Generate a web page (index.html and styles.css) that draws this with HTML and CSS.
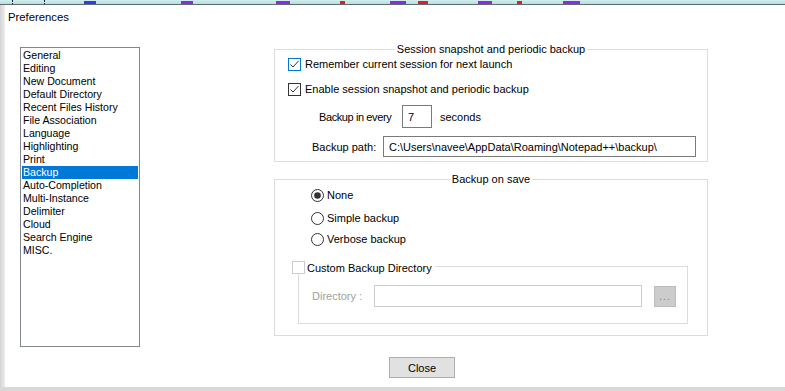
FILE: index.html
```html
<!DOCTYPE html>
<html>
<head>
<meta charset="utf-8">
<title>Preferences</title>
<link rel="stylesheet" href="styles.css">
</head>
<body>
<div class="screen">
  <div class="behind">
    <span class="dot d1"></span>
    <span class="dot d2"></span>
    <span class="bit blue b1"></span>
    <span class="bit purple b2"></span>
    <span class="bit purple b3"></span>
    <span class="bit red b4"></span>
    <span class="bit purple b5"></span>
    <span class="bit red b6"></span>
    <span class="bit purple b7"></span>
    <span class="bit red b8"></span>
    <span class="bit purple b9"></span>
  </div>
  <div class="main">
    <div class="side"></div>
    <div class="window">
      <div class="titlebar">Preferences</div>
      <div class="body">
        <ul class="list">
          <li>General</li>
          <li>Editing</li>
          <li>New Document</li>
          <li>Default Directory</li>
          <li>Recent Files History</li>
          <li>File Association</li>
          <li>Language</li>
          <li>Highlighting</li>
          <li>Print</li>
          <li class="sel">Backup</li>
          <li>Auto-Completion</li>
          <li>Multi-Instance</li>
          <li>Delimiter</li>
          <li>Cloud</li>
          <li>Search Engine</li>
          <li>MISC.</li>
        </ul>
        <div class="panel">
          <div class="group g1">
            <div class="gtitle">Session snapshot and periodic backup</div>
            <div class="row r1">
              <svg class="cb" width="13" height="13" viewBox="0 0 13 13"><rect x="0.5" y="0.5" width="12" height="12" fill="#fff" stroke="#0078d7"/><polyline points="2.5,6.5 5,9 10.5,3" fill="none" stroke="#333" stroke-width="1"/></svg>
              <span>Remember current session for next launch</span>
            </div>
            <div class="row r2">
              <svg class="cb" width="13" height="13" viewBox="0 0 13 13"><rect x="0.5" y="0.5" width="12" height="12" fill="#fff" stroke="#333"/><polyline points="2.5,6.5 5,9 10.5,3" fill="none" stroke="#333" stroke-width="1"/></svg>
              <span>Enable session snapshot and periodic backup</span>
            </div>
            <div class="row r3">
              <span class="lbl-every">Backup in every</span>
              <div class="input num">7</div>
              <span class="secs">seconds</span>
            </div>
            <div class="row r4">
              <span class="lbl-path">Backup path:</span>
              <div class="input path">C:\Users\navee\AppData\Roaming\Notepad++\backup\</div>
            </div>
          </div>
          <div class="group g2">
            <div class="gtitle">Backup on save</div>
            <div class="row rad ra1">
              <svg class="rb" width="13" height="13" viewBox="0 0 13 13"><circle cx="6.5" cy="6.5" r="6" fill="#fff" stroke="#333"/><circle cx="6.5" cy="6.5" r="3.3" fill="#333"/></svg>
              <span>None</span>
            </div>
            <div class="row rad ra2">
              <svg class="rb" width="13" height="13" viewBox="0 0 13 13"><circle cx="6.5" cy="6.5" r="6" fill="#fff" stroke="#333"/></svg>
              <span>Simple backup</span>
            </div>
            <div class="row rad ra3">
              <svg class="rb" width="13" height="13" viewBox="0 0 13 13"><circle cx="6.5" cy="6.5" r="6" fill="#fff" stroke="#333"/></svg>
              <span>Verbose backup</span>
            </div>
            <div class="inner">
              <div class="ititle">
                <svg class="cb" width="13" height="13" viewBox="0 0 13 13"><rect x="0.5" y="0.5" width="12" height="12" fill="#fff" stroke="#cccccc"/></svg>
                <span>Custom Backup Directory</span>
              </div>
              <div class="row dirrow">
                <span class="lbl-dir">Directory :</span>
                <div class="input dir"></div>
                <div class="browse">...</div>
              </div>
            </div>
          </div>
        </div>
      </div>
      <div class="footer"><button class="btn">Close</button></div>
    </div>
  </div>
  <div class="bottom"></div>
</div>
</body>
</html>
```
FILE: styles.css
```css
* { box-sizing: border-box; }
body {
  margin: 0;
  font-family: "Liberation Sans", Arial, sans-serif;
  font-size: 11px;
  color: #000;
}
.screen {
  width: 785px;
  height: 391px;
  overflow: hidden;
  background: #e2e2e2;
}
.behind {
  height: 5px;
  background: linear-gradient(#d0eeee, #b8dcdd);
  border-bottom: 1px solid #5f6d6d;
  display: flex;
  align-items: flex-start;
}
.dot {
  width: 1px;
  height: 4px;
  border-left: 1px dotted #222;
}
.d1 { margin-left: 12px; }
.d2 { margin-left: 31px; }
.bit { height: 3px; margin-top: 1px; }
.blue { background: #3a3ad8; }
.purple { background: #8a2be2; }
.red { background: #e02020; }
.b1 { margin-left: 39px; width: 12px; }
.b2 { margin-left: 85px; width: 12px; }
.b3 { margin-left: 83px; width: 14px; }
.b4 { margin-left: 50px; width: 5px; }
.b5 { margin-left: 45px; width: 16px; }
.b6 { margin-left: 12px; width: 10px; }
.b7 { margin-left: 50px; width: 14px; }
.b8 { margin-left: 25px; width: 5px; }
.b9 { margin-left: 41px; width: 17px; }

.main {
  display: flex;
  height: 382px;
}
.side {
  width: 5px;
  background: linear-gradient(90deg, #d4d4d4, #ececec);
}
.window {
  flex: 1;
  background: #fff;
  display: flex;
  flex-direction: column;
}
.titlebar {
  height: 25px;
  line-height: 25px;
  padding-left: 3px;
  font-size: 11.3px;
}
.body {
  display: flex;
  align-items: flex-start;
}
.list {
  margin: 17px 0 0 15px;
  width: 120px;
  height: 300px;
  border: 1px solid #828790;
  padding: 1px;
  list-style: none;
  font-size: 10.6px;
}
.list li {
  height: 13px;
  line-height: 13px;
  padding-left: 1px;
  white-space: nowrap;
}
.list li.sel {
  background: #0078d7;
  color: #fff;
}
.panel {
  margin: 19px 0 0 134px;
  width: 434px;
}
.group {
  border: 1px solid #dcdcdc;
}
.gtitle {
  width: max-content;
  margin: -7px auto 0;
  padding: 0 2px;
  height: 13px;
  line-height: 13px;
  background: #fff;
}
.row {
  display: flex;
  align-items: center;
  white-space: nowrap;
}
.cb, .rb { flex: none; display: block; }
.r1, .r2 { height: 14px; padding-left: 13px; gap: 4px; }
.r1 { margin-top: 1px; }
.r2 { margin-top: 11px; }
.r3 { height: 23px; margin-top: 9px; padding-left: 44px; }
.lbl-every { width: 83px; letter-spacing: -0.4px; }
.input {
  border: 1px solid #7a7a7a;
  background: #fff;
  padding-left: 5px;
  display: flex;
  align-items: center;
  white-space: nowrap;
  overflow: hidden;
}
.num { width: 30px; height: 23px; }
.secs { margin-left: 8px; }
.r4 { height: 21px; margin-top: 8px; padding-left: 37px; }
.lbl-path { width: 71px; }
.path { width: 313px; height: 21px; }
.g1 { padding-bottom: 4px; }

.g2 { margin-top: 17px; padding-bottom: 11px; }
.rad { height: 14px; padding-left: 36px; gap: 3px; }
.ra1 { margin-top: 2px; }
.ra2 { margin-top: 9px; }
.ra3 { margin-top: 7px; }
.inner {
  margin: 20px 19px 0 23px;
  border: 1px solid #dcdcdc;
  padding-bottom: 16px;
}
.ititle {
  display: flex;
  align-items: center;
  gap: 2px;
  width: max-content;
  height: 13px;
  margin: -6px 0 0 -7px;
  padding-right: 3px;
  background: #fff;
}
.dirrow { height: 22px; margin-top: 11px; padding-left: 13px; }
.lbl-dir { width: 62px; color: #a0a0a0; }
.dir { width: 268px; height: 22px; border-color: #cccccc; }
.browse {
  margin-left: 12px;
  width: 22px;
  height: 21px;
  background: #cccccc;
  border: 1px solid #bdbdbd;
  color: #7f7b98;
  font-size: 10px;
  line-height: 19px;
  text-align: center;
  letter-spacing: 1px;
}
.footer {
  margin-top: 10px;
  padding-left: 384px;
}
.btn {
  width: 66px;
  height: 21px;
  border: 1px solid #adadad;
  background: #e1e1e1;
  font: inherit;
  color: #000;
  padding: 0;
}
.bottom {
  height: 4px;
  background: #d8d8d8;
}
```
